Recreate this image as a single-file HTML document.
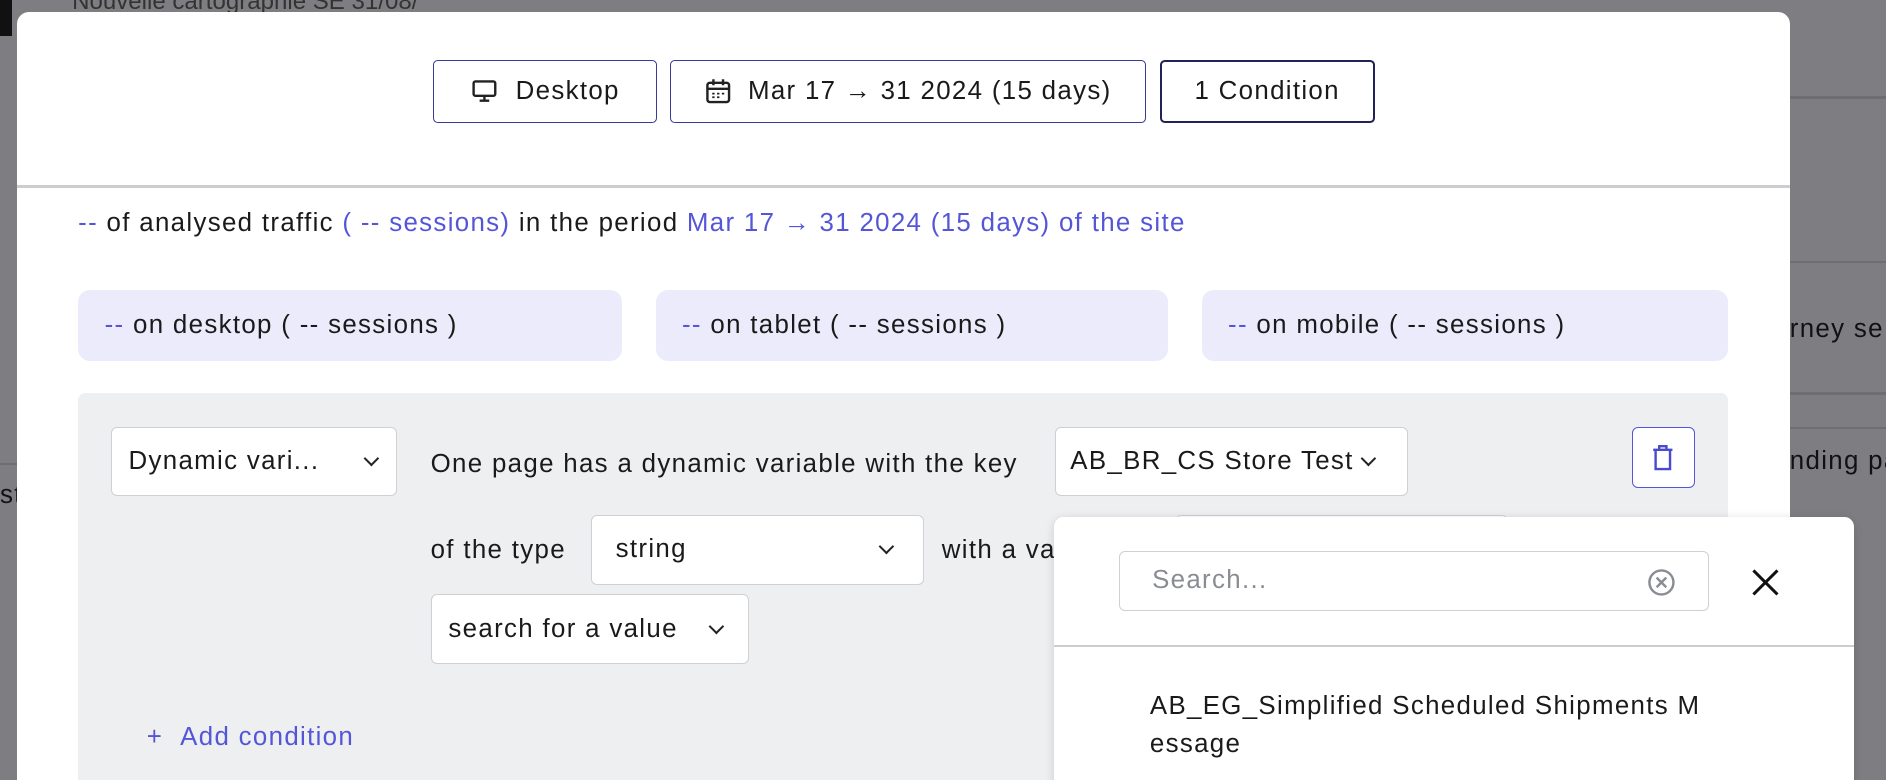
<!DOCTYPE html>
<html><head><style>
*{box-sizing:border-box;margin:0;padding:0}
html,body{width:1886px;height:780px;overflow:hidden;background:#7e7e82}
#w{zoom:1.20281;width:1568px;height:649px;position:relative;font-family:"Liberation Sans",sans-serif;font-size:21.5px;letter-spacing:1.1px;color:#1a1a1a}
.a{position:absolute}
.btn{position:absolute;top:50px;height:52px;border:1.5px solid #3a3a9a;border-radius:4px;background:#fff;display:flex;align-items:center;justify-content:center;gap:14px}
.card{position:absolute;top:241px;height:59px;background:#ebebfb;border-radius:10px;padding-left:22px;display:flex;align-items:center}
.b{color:#5555d8}
.sel{position:absolute;background:#fff;border:1.5px solid #cfd0d4;border-radius:5px;display:flex;align-items:center;padding-left:14px;padding-right:16px;justify-content:space-between;white-space:nowrap}
.chev{width:9px;height:9px;border-right:2px solid #222;border-bottom:2px solid #222;transform:rotate(45deg);margin-top:-5px;flex:none}
.txt{position:absolute;line-height:24px;white-space:nowrap}
</style></head><body><div id="w">
<div class="a" style="left:60px;top:-10px;width:440px;height:20px;color:#333;font-size:20px;letter-spacing:0">Nouvelle cartographie SE 31/08/</div>
<div class="a" style="left:0;top:0;width:10px;height:30px;background:#111"></div>
<div class="a" style="left:1488px;top:80px;width:80px;height:2px;background:#6e6e72"></div>
<div class="a" style="left:1488px;top:217px;width:80px;height:2px;background:#6e6e72"></div>
<div class="a" style="left:1488px;top:326px;width:80px;height:2px;background:#6e6e72"></div>
<div class="a" style="left:1488px;top:355px;width:80px;height:2px;background:#6e6e72"></div>
<div class="a" style="left:0;top:385px;width:14px;height:2px;background:#6e6e72"></div>
<div class="txt" style="left:1488px;top:262px;color:#111">rney se</div>
<div class="txt" style="left:1488px;top:372px;color:#111">nding pa</div>
<div class="txt" style="left:0;top:400px;color:#111">st</div>

<div class="a" style="left:14px;top:10px;width:1474px;height:660px;background:#fff;border-radius:10px"></div>
<div class="btn" style="left:360px;width:186px"><svg width="24" height="20" viewBox="0 0 22 20"><rect x="2" y="2" width="18" height="12" rx="1.5" fill="none" stroke="#222" stroke-width="2"/><path d="M11 14v4M7 18h8" stroke="#222" stroke-width="2"/></svg>Desktop</div>
<div class="btn" style="left:557px;width:396px"><svg width="22" height="22" viewBox="0 0 22 22"><rect x="2" y="4" width="18" height="16" rx="2" fill="none" stroke="#222" stroke-width="2"/><path d="M2 9h18M7 1v5M15 1v5" stroke="#222" stroke-width="2"/><path d="M6 13h2M10 13h2M14 13h2M6 16h2M10 16h2" stroke="#222" stroke-width="1.5"/></svg>Mar 17 → 31 2024 (15 days)</div>
<div class="btn" style="left:964px;width:179px;border:2px solid #22225a">1 Condition</div>
<div class="a" style="left:14px;top:154px;width:1474px;height:2px;background:#cdcdd0"></div>
<div class="txt" style="left:65px;top:174px"><span class="b">--</span> of analysed traffic <span class="b">( -- sessions)</span> in the period <span class="b">Mar 17 → 31 2024 (15 days) of the site</span></div>
<div class="card" style="left:65px;width:452px"><span class="b">--</span>&nbsp;on desktop ( -- sessions )</div>
<div class="card" style="left:545px;width:426px"><span class="b">--</span>&nbsp;on tablet ( -- sessions )</div>
<div class="card" style="left:999px;width:438px"><span class="b">--</span>&nbsp;on mobile ( -- sessions )</div>
<div class="a" style="left:65px;top:327px;width:1372px;height:340px;background:#eeeff1;border-radius:6px"></div>
<div class="sel" style="left:92px;top:355px;width:238px;height:57px">Dynamic vari...<div class="chev"></div></div>
<div class="txt" style="left:358px;top:374px">One page has a dynamic variable with the key</div>
<div class="sel" style="left:877px;top:355px;width:294px;height:57px;padding-left:12px;padding-right:28px">AB_BR_CS Store Test<div class="chev"></div></div>
<div class="a" style="left:1357px;top:355px;width:52px;height:51px;border:1.5px solid #5555d8;border-radius:5px;background:#fff"><svg class="a" style="left:16px;top:14px" width="18" height="22" viewBox="0 0 18 22"><path d="M1 4h16M6 4V1h6v3M3 4v16h12V4" fill="none" stroke="#4a4ad0" stroke-width="2"/></svg></div>
<div class="txt" style="left:358px;top:446px">of the type</div>
<div class="sel" style="left:491px;top:428px;width:277px;height:58px;padding-left:20px;padding-right:26px">string<div class="chev"></div></div>
<div class="txt" style="left:783px;top:446px">with a va</div>
<div class="sel" style="left:977px;top:428px;width:277px;height:58px"></div>
<div class="sel" style="left:358px;top:494px;width:265px;height:58px;padding-right:22px">search for a value<div class="chev"></div></div>
<div class="txt b" style="left:122px;top:601px">+&nbsp;&nbsp;Add condition</div>
<div class="a" style="left:876px;top:430px;width:665px;height:240px;background:#fff;border-radius:8px;box-shadow:0 2px 8px rgba(0,0,0,.15)"></div>
<div class="a" style="left:930px;top:458px;width:491px;height:50px;border:1.5px solid #cfd0d4;border-radius:5px;background:#fff;padding-left:27px;line-height:48px;color:#8a8c94">Search...</div>
<svg class="a" style="left:1369px;top:472px" width="24" height="24" viewBox="0 0 24 24"><circle cx="12" cy="12" r="10" fill="none" stroke="#8a8c94" stroke-width="2"/><path d="M8 8l8 8M16 8l-8 8" stroke="#8a8c94" stroke-width="2"/></svg>
<svg class="a" style="left:1456px;top:472px" width="24" height="24" viewBox="0 0 24 24"><path d="M2 2l20 20M22 2L2 22" stroke="#111" stroke-width="2.5"/></svg>
<div class="a" style="left:876px;top:536px;width:665px;height:2px;background:#cdcdd0"></div>
<div class="txt" style="left:956px;top:571px;line-height:32px">AB_EG_Simplified Scheduled Shipments M<br>essage</div>
</div></body></html>
